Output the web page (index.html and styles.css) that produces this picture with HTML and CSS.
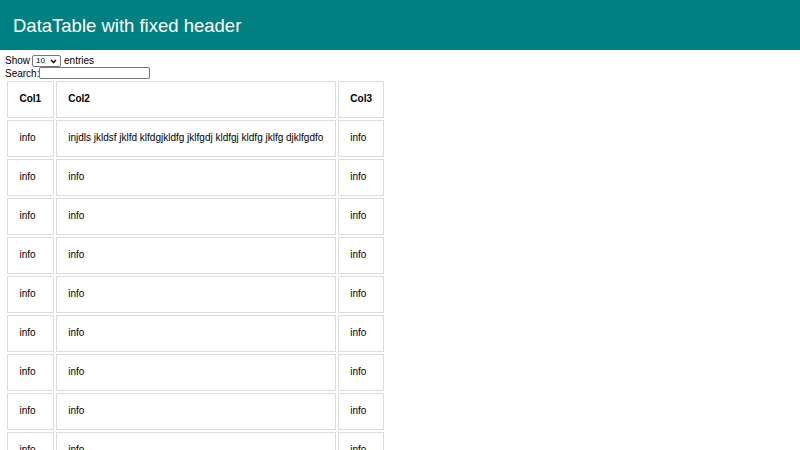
FILE: index.html
```html
<!DOCTYPE html>
<html lang="en">
<head>
  <meta charset="UTF-8">
  <meta name="viewport" content="width=device-width, initial-scale=1.0">
  <title>DataTable with fixed header</title>
  <link rel="stylesheet" href="styles.css">
</head>
<body>

  <header class="top-bar">
    <h1>DataTable with fixed header</h1>
  </header>

  <div class="controls">
    <div class="row">
      <label for="length">Show</label>
      <span class="select-wrap">
        <select id="length">
          <option>10</option>
          <option>25</option>
          <option>50</option>
          <option>100</option>
        </select>
        <svg class="chevron" width="7" height="5" viewBox="0 0 7 5"><path d="M1 1 L3.5 3.5 L6 1" fill="none" stroke="#000" stroke-width="1.4"/></svg>
      </span>
      <span>entries</span>
    </div>
    <div class="row">
      <label for="search" class="search-label">Search:</label><input type="text" id="search">
    </div>
  </div>

  <table class="data">
    <thead>
      <tr>
        <th>Col1</th>
        <th>Col2</th>
        <th>Col3</th>
      </tr>
    </thead>
    <tbody>
      <tr><td>info</td><td>injdls jkldsf jklfd klfdgjkldfg jklfgdj kldfgj kldfg jklfg djklfgdfo</td><td>info</td></tr>
      <tr><td>info</td><td>info</td><td>info</td></tr>
      <tr><td>info</td><td>info</td><td>info</td></tr>
      <tr><td>info</td><td>info</td><td>info</td></tr>
      <tr><td>info</td><td>info</td><td>info</td></tr>
      <tr><td>info</td><td>info</td><td>info</td></tr>
      <tr><td>info</td><td>info</td><td>info</td></tr>
      <tr><td>info</td><td>info</td><td>info</td></tr>
      <tr><td>info</td><td>info</td><td>info</td></tr>
      <tr><td>info</td><td>info</td><td>info</td></tr>
    </tbody>
  </table>

</body>
</html>
```

FILE: styles.css
```css
* {
  box-sizing: border-box;
}
body {
  margin: 0;
  font-family: "Liberation Sans", Arial, sans-serif;
  font-size: 10px;
  color: #000;
  background-color: #fff;
}
.top-bar {
  background-color: #008080;
  height: 50px;
  display: flex;
  align-items: center;
  padding: 2px 0 0 13px;
}
.top-bar h1 {
  margin: 0;
  font-size: 18.5px;
  font-weight: normal;
  color: #fff;
}
.controls {
  padding: 4px 0 0 5px;
}
.row {
  display: flex;
  align-items: center;
  height: 12px;
}
.row:first-child {
  height: 13px;
}
.select-wrap {
  position: relative;
  display: inline-block;
  margin: 0 3px 0 2px;
  height: 12px;
}
select {
  appearance: none;
  -webkit-appearance: none;
  display: block;
  font-family: "Liberation Sans", Arial, sans-serif;
  font-size: 8px;
  width: 29px;
  height: 12px;
  padding: 0 0 0 3px;
  margin: 0;
  border: 1px solid #767676;
  border-radius: 2px;
  background-color: #fff;
  color: #000;
}
.chevron {
  position: absolute;
  right: 4px;
  top: 4px;
  pointer-events: none;
}
input {
  width: 111px;
  height: 12px;
  padding: 0 2px;
  margin: 0;
  border: 1px solid #767676;
  border-radius: 2px;
  font-size: 9px;
}
.data {
  margin-left: 5px;
  border-spacing: 2px;
}
.data th, .data td {
  border: 1px solid #dcdcdc;
  padding: 11px 11.5px 12px;
  line-height: 12px;
  text-align: left;
  white-space: nowrap;
}
.data th {
  font-weight: bold;
}
```
